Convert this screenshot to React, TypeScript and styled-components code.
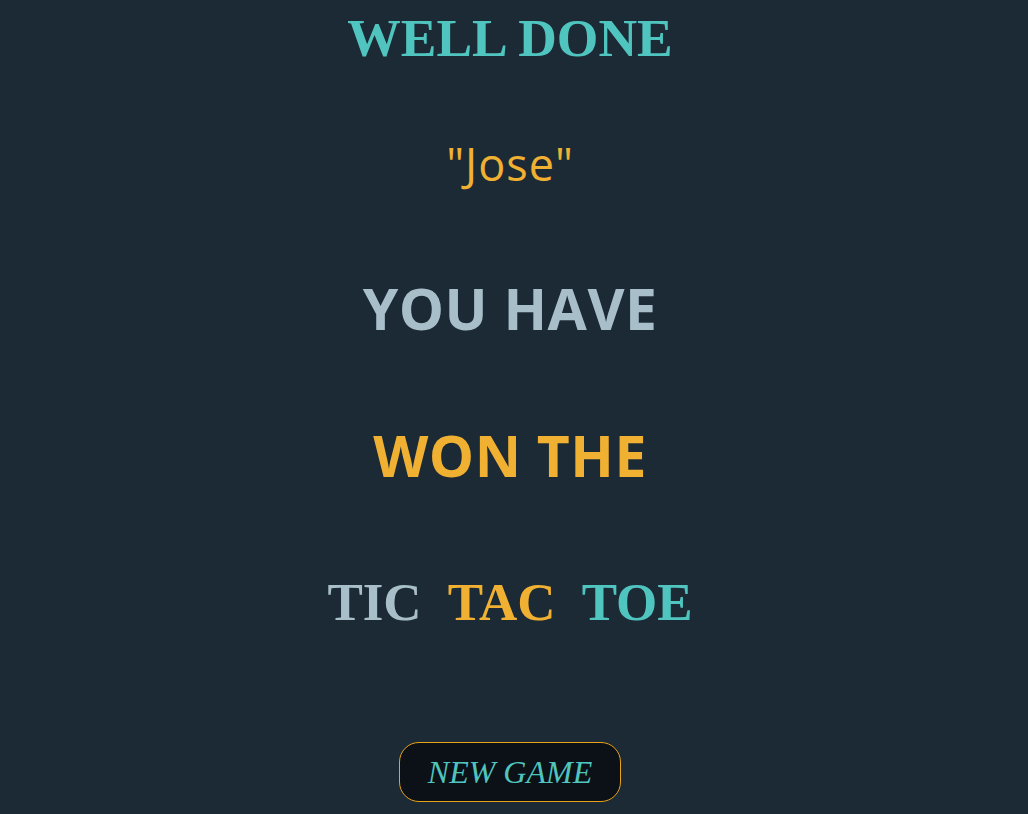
import React from "react";
import styled, { createGlobalStyle } from "styled-components";

const Global = createGlobalStyle`
  html, body { margin: 0; padding: 0; background: #1c2a35; }
  body { min-height: 814px; }
`;

const Page = styled.main`
  display: flex;
  flex-direction: column;
  align-items: center;
  box-sizing: border-box;
  width: 100%;
  min-height: 814px;
  padding-right: 8px;
  background: #1c2a35;
`;

const Title = styled.h1`
  margin: 0;
  font-family: "Liberation Serif", "Times New Roman", serif;
  font-weight: 700;
  font-size: 53.5px;
  line-height: 76px;
  color: #50c4bf;
`;

const Casual = styled.div<{ $color: string; $size: number; $gap: number; $bold?: boolean }>`
  margin-top: ${(p) => p.$gap}px;
  font-family: "Comic Sans MS", "Open Sans", sans-serif;
  font-weight: ${(p) => (p.$bold ? 700 : 400)};
  font-size: ${(p) => p.$size}px;
  letter-spacing: ${(p) => (p.$bold ? 0.5 : 1)}px;
  line-height: 80px;
  color: ${(p) => p.$color};
`;

const Game = styled.div`
  margin-top: 67px;
  display: flex;
  gap: 26px;
  font-family: "Liberation Serif", "Times New Roman", serif;
  font-weight: 700;
  font-size: 53px;
  line-height: 80px;
`;

const Word = styled.span<{ $color: string }>`
  color: ${(p) => p.$color};
`;

const Button = styled.button`
  margin-top: 100px;
  width: 222px;
  height: 60px;
  border: 1px solid #e9a21a;
  border-radius: 20px;
  background: #0b1116;
  color: #50c4bf;
  font-family: "Liberation Serif", "Times New Roman", serif;
  font-style: italic;
  font-size: 32px;
  padding: 0;
  cursor: pointer;
`;

export default function App() {
  return (
    <Page>
      <Global />
      <Title>WELL DONE</Title>
      <Casual $color="#f0b032" $size={45} $gap={48}>"Jose"</Casual>
      <Casual $color="#a8bfc9" $size={57} $gap={64} $bold>YOU HAVE</Casual>
      <Casual $color="#f0b032" $size={57} $gap={67} $bold>WON THE</Casual>
      <Game>
        <Word $color="#a8bfc9">TIC</Word>
        <Word $color="#f0b032">TAC</Word>
        <Word $color="#50c4bf">TOE</Word>
      </Game>
      <Button>NEW GAME</Button>
    </Page>
  );
}
